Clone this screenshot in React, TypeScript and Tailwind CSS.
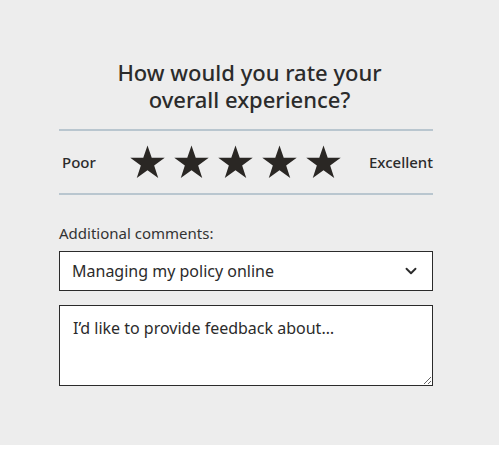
import { ChevronDown } from 'lucide-react';

function Star() {
    return (
        <svg viewBox="0 0 24 24" className="h-[39px] w-[39px] fill-[#2a2724]">
            <path d="M12 1.5l2.6 7.6h8l-6.5 4.8 2.5 7.7L12 16.8l-6.6 4.8 2.5-7.7L1.4 9.1h8z" />
        </svg>
    );
}

export default function App() {
    return (
        <div className="h-[450px] w-[501px] bg-white font-['Noto_Sans',sans-serif] text-[#2b2b2b]">
            <div className="flex h-[445px] w-[499px] flex-col bg-[#ededed] pt-[59px]">
                <h1 className="text-center text-[22px] leading-[27px] font-medium">
                    How would you rate your
                    <br />
                    overall experience?
                </h1>

                <div className="mt-[16px] ml-[59px] flex h-[66px] w-[374px] items-center border-y-2 border-[#b9c6cf]">
                    <span className="ml-[3px] text-[15px] font-medium">Poor</span>
                    <div className="ml-[32px] flex gap-[5px]">
                        <Star />
                        <Star />
                        <Star />
                        <Star />
                        <Star />
                    </div>
                    <span className="ml-auto text-[15px] font-medium">Excellent</span>
                </div>

                <div className="mt-[27px] ml-[59px] flex w-[374px] flex-col">
                    <label className="text-[15px] leading-[22px] text-[#333]">Additional comments:</label>
                    <div className="mt-[7px] flex h-[40px] items-center justify-between border border-[#2b2b2b] bg-white px-[12px]">
                        <span className="text-[16px]">Managing my policy online</span>
                        <ChevronDown className="size-[18px]" strokeWidth={2.5} />
                    </div>
                    <textarea
                        className="mt-[14px] h-[81px] resize-y border border-[#2b2b2b] bg-white px-[13px] pt-[10px] text-[16px] text-[#2b2b2b] placeholder:text-[#2b2b2b] outline-none"
                        placeholder="I’d like to provide feedback about…"
                    />
                </div>
            </div>
        </div>
    );
}
